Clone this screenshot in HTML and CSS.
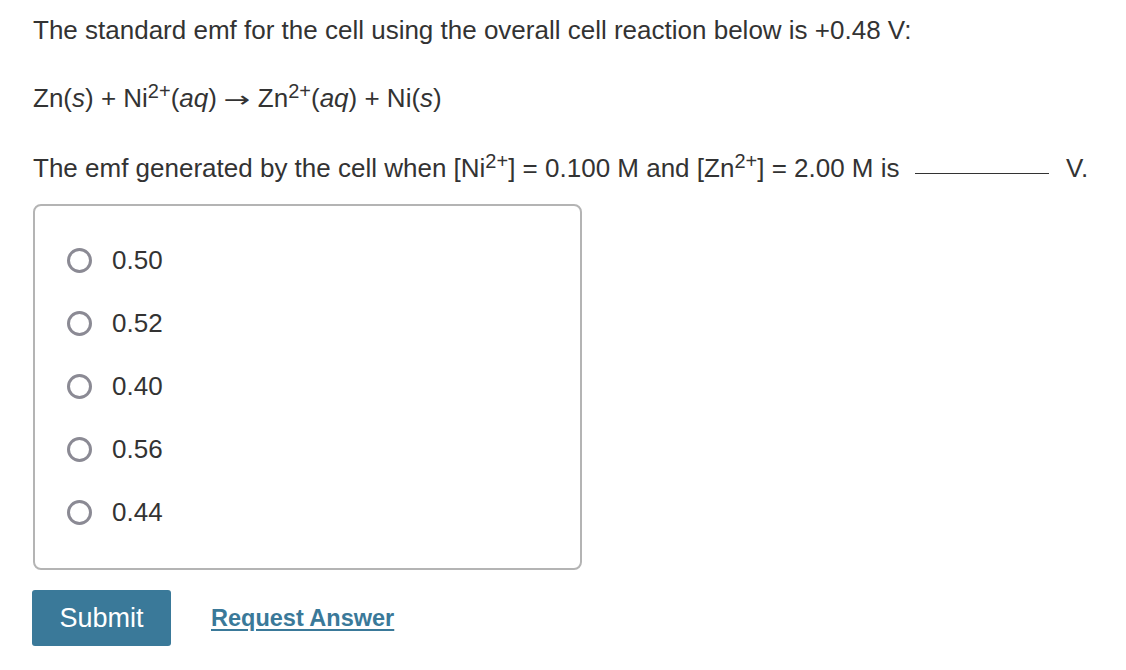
FILE: index.html
```html
<!DOCTYPE html>
<html>
<head>
<meta charset="utf-8">
<link rel="stylesheet" href="styles.css">
</head>
<body>
<div class="page">
  <p class="line l1">The standard emf for the cell using the overall cell reaction below is +0.48 V:</p>
  <p class="line l2">Zn(<i>s</i>) + Ni<sup>2+</sup>(<i>aq</i>) <span class="arrow">→</span> Zn<sup>2+</sup>(<i>aq</i>) + Ni(<i>s</i>)</p>
  <p class="line l3">The emf generated by the cell when [Ni<sup>2+</sup>] = 0.100 M and [Zn<sup>2+</sup>] = 2.00 M is <span class="blank"></span> V.</p>
  <div class="choices">
    <label class="choice"><span class="radio"></span><span>0.50</span></label>
    <label class="choice"><span class="radio"></span><span>0.52</span></label>
    <label class="choice"><span class="radio"></span><span>0.40</span></label>
    <label class="choice"><span class="radio"></span><span>0.56</span></label>
    <label class="choice"><span class="radio"></span><span>0.44</span></label>
  </div>
  <div class="actions">
    <button class="submit">Submit</button>
    <a class="request" href="#">Request Answer</a>
  </div>
</div>
</body>
</html>
```
FILE: styles.css
```css
html, body { margin: 0; padding: 0; background: #fff; }
body { font-family: "Liberation Sans", Arial, sans-serif; color: #333; font-size: 26px; }
.page { padding: 13px 0 0 33px; }
.line { margin: 0; height: 34px; line-height: 34px; white-space: nowrap; }
.l2 { margin-top: 34px; }
.l3 { margin-top: 36px; }
sup { font-size: 20px; line-height: 0; vertical-align: 9px; }
.arrow { font-family: "DejaVu Sans", sans-serif; font-size: 22px; line-height: 0; display: inline-block; transform: scaleX(1.45); margin: 0 4px; }
.blank { display: inline-block; width: 134px; border-bottom: 1.5px solid #333; vertical-align: 3px; margin: 0 10px 0 8px; }
.choices {
  margin-top: 19px;
  width: 549px; height: 366px; box-sizing: border-box;
  border: 2px solid #b4b4b4; border-radius: 8px;
  padding: 40px 0 0 32px;
  display: flex; flex-direction: column; gap: 35px;
}
.choice { display: flex; align-items: center; gap: 20px; height: 28px; }
.radio { width: 19px; height: 19px; border: 3px solid #8b8a94; border-radius: 50%; }
.actions { margin-top: 20px; display: flex; align-items: center; gap: 40px; }
.submit {
  width: 139px; height: 56px; background: #3a7999; color: #fff; border: none; border-radius: 3px;
  font-family: "Liberation Sans", Arial, sans-serif; font-size: 27px; padding: 0; margin-left: -1px;
}
.request { color: #3a7999; font-weight: bold; font-size: 23.5px; text-decoration: underline; text-underline-offset: 3px; }
```
